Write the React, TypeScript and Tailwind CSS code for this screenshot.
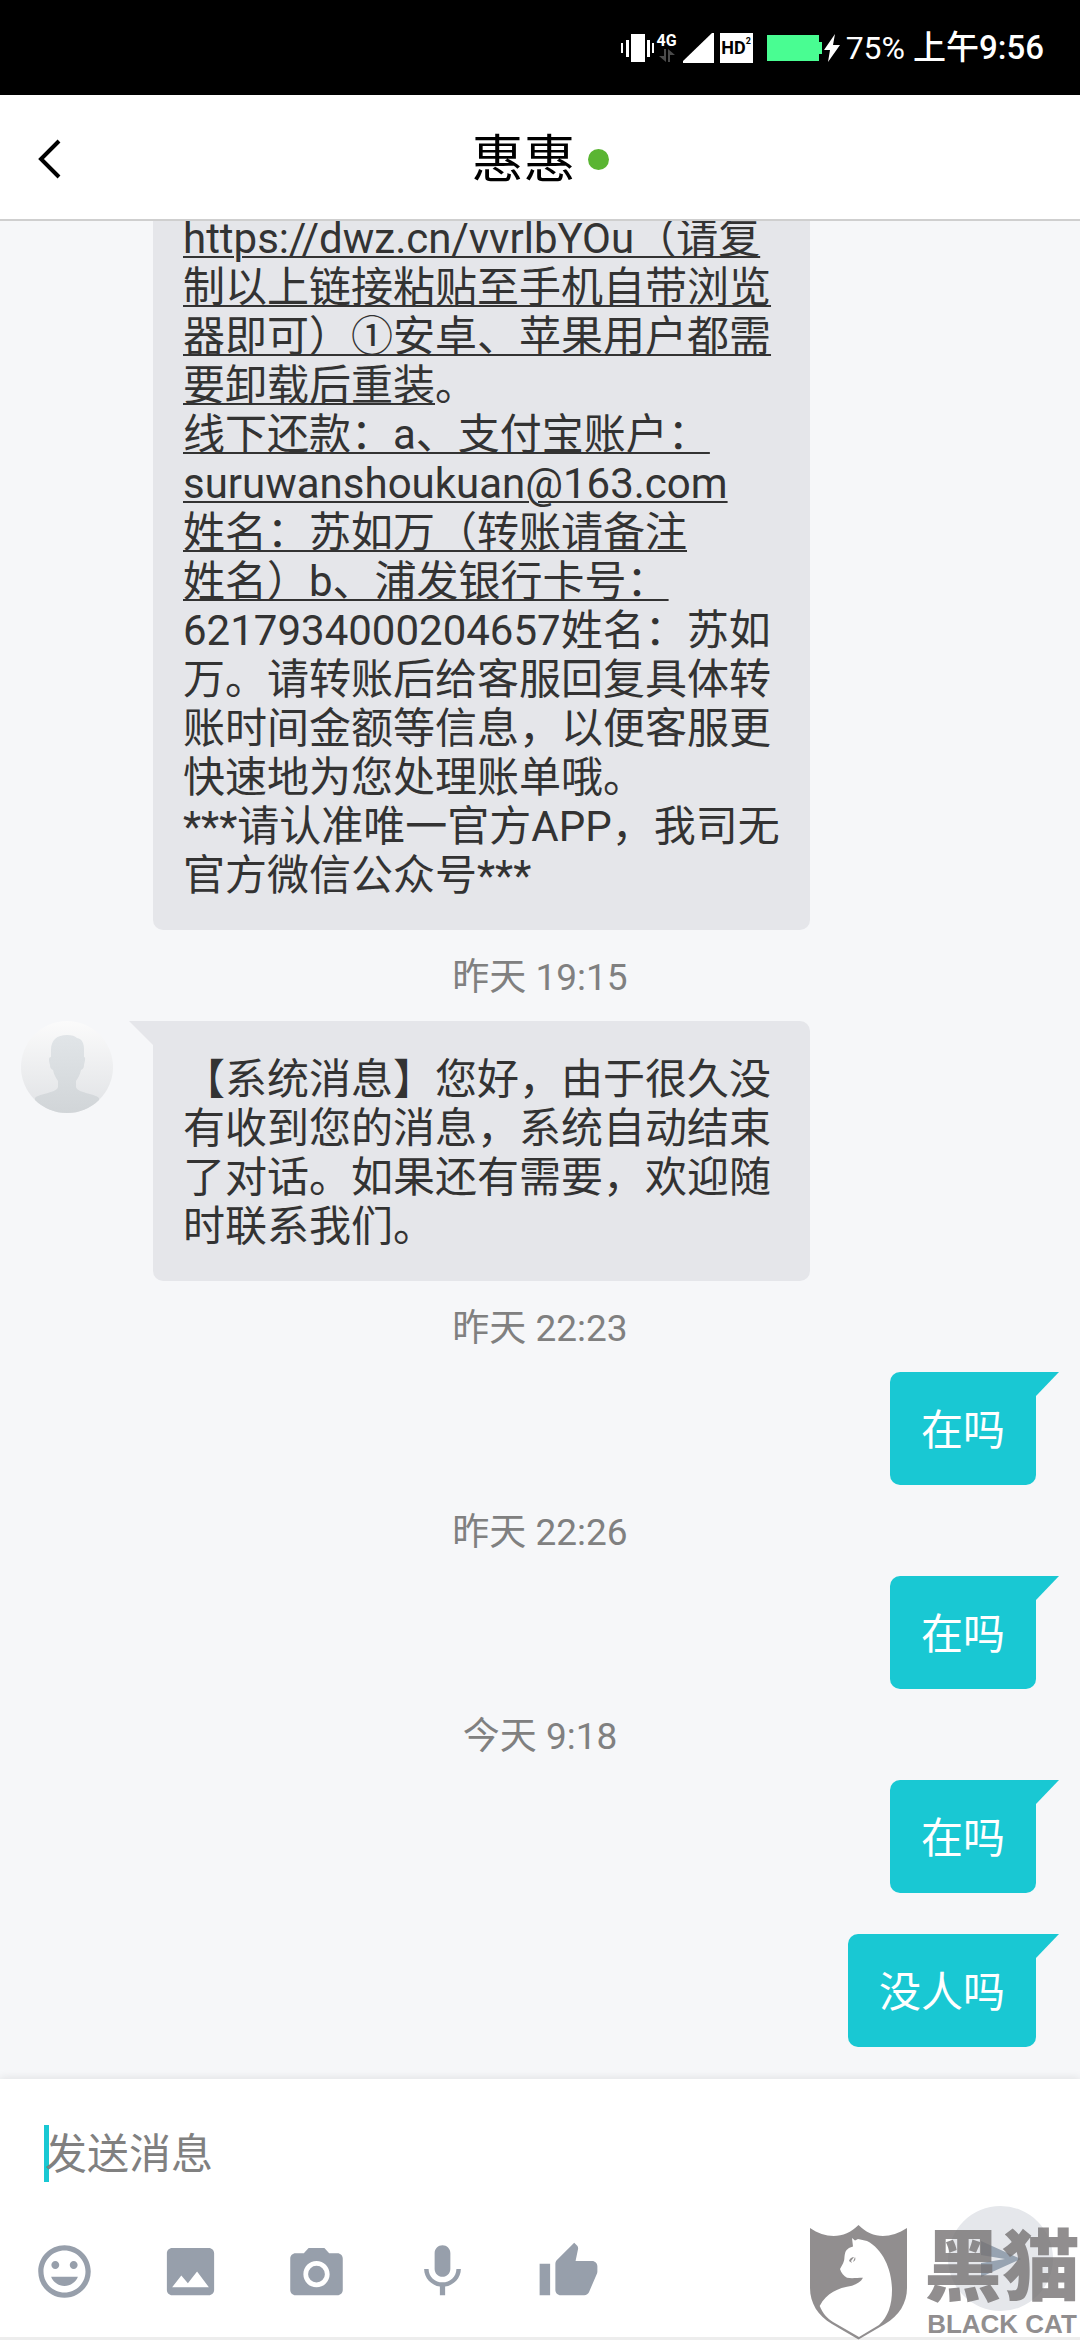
import React from "react";

type Message = {
    time?: string;
    from: "agent" | "me";
    lines: string[];
    underlined?: number;
    avatar?: boolean;
};

const messages: Message[] = [
    {
        from: "agent",
        underlined: 8,
        lines: [
            "https://dwz.cn/vvrlbYOu（请复",
            "制以上链接粘贴至手机自带浏览",
            "器即可）①安卓、苹果用户都需",
            "要卸载后重装。",
            "线下还款：a、支付宝账户：",
            "suruwanshoukuan@163.com",
            "姓名：苏如万（转账请备注",
            "姓名）b、浦发银行卡号：",
            "6217934000204657姓名：苏如",
            "万。请转账后给客服回复具体转",
            "账时间金额等信息，以便客服更",
            "快速地为您处理账单哦。",
            "***请认准唯一官方APP，我司无",
            "官方微信公众号***",
        ],
    },
    {
        time: "昨天 19:15",
        from: "agent",
        avatar: true,
        lines: [
            "【系统消息】您好，由于很久没",
            "有收到您的消息，系统自动结束",
            "了对话。如果还有需要，欢迎随",
            "时联系我们。",
        ],
    },
    { time: "昨天 22:23", from: "me", lines: ["在吗"] },
    { time: "昨天 22:26", from: "me", lines: ["在吗"] },
    { time: "今天 9:18", from: "me", lines: ["在吗"] },
    { from: "me", lines: ["没人吗"] },
];

const tools = [
    {
        label: "表情",
        d: "M11.99 2C6.47 2 2 6.48 2 12s4.47 10 9.99 10C17.52 22 22 17.52 22 12S17.52 2 11.99 2zM12 20c-4.42 0-8-3.58-8-8s3.58-8 8-8 8 3.58 8 8-3.58 8-8 8zm3.5-9c.83 0 1.5-.67 1.5-1.5S16.33 8 15.5 8 14 8.67 14 9.5s.67 1.5 1.5 1.5zm-7 0c.83 0 1.5-.67 1.5-1.5S9.33 8 8.5 8 7 8.67 7 9.5 7.67 11 8.5 11zm3.5 6.5c2.33 0 4.31-1.46 5.11-3.5H6.89c.8 2.04 2.78 3.5 5.11 3.5z",
    },
    {
        label: "图片",
        d: "M21 19V5c0-1.1-.9-2-2-2H5c-1.1 0-2 .9-2 2v14c0 1.1.9 2 2 2h14c1.1 0 2-.9 2-2zM8.5 13.5l2.5 3.01L14.5 12l4.5 6H5l3.5-4.5z",
    },
    {
        label: "拍照",
        d: "M12 9.8a3.2 3.2 0 1 0 0 6.4 3.2 3.2 0 0 0 0-6.4zM9 3L7.17 5H4c-1.1 0-2 .9-2 2v12c0 1.1.9 2 2 2h16c1.1 0 2-.9 2-2V7c0-1.1-.9-2-2-2h-3.17L15 3H9zm3 15c-2.76 0-5-2.24-5-5s2.24-5 5-5 5 2.24 5 5-2.24 5-5 5z",
    },
    {
        label: "语音",
        d: "M12 14c1.66 0 2.99-1.34 2.99-3L15 5c0-1.66-1.34-3-3-3S9 3.34 9 5v6c0 1.66 1.34 3 3 3zm5.3-3c0 3-2.54 5.1-5.3 5.1S6.7 14 6.7 11H5c0 3.41 2.72 6.23 6 6.72V21h2v-3.28c3.28-.48 6-3.3 6-6.72h-1.7z",
    },
    {
        label: "点赞",
        d: "M1 21h4V9H1v12zm22-11c0-1.1-.9-2-2-2h-6.31l.95-4.57.03-.32c0-.41-.17-.79-.44-1.06L14.17 1 7.59 7.59C7.22 7.95 7 8.45 7 9v10c0 1.1.9 2 2 2h9c.83 0 1.54-.5 1.84-1.22l3.02-7.05c.09-.23.14-.47.14-.73v-2z",
    },
];

const StatusBar = () => (
    <div className="flex h-[95px] shrink-0 items-center justify-end bg-black pr-9 text-white">
        {/* Вибрация */}
        <svg width="34" height="30" viewBox="0 0 34 30" fill="#fff">
            <path d="M0 10h2v10H0zM5 7h3v17H5zM10 1h14v28H10zM26 7h3v17h-3zM31 10h2v10h-2z" />
        </svg>
        <div className="ml-0.5 flex flex-col items-center">
            <span className="text-base leading-4 font-bold">4G</span>
            <svg width="16" height="13" viewBox="0 0 16 13" fill="#4a4a4a">
                <path d="M5 0h2v13L0 7h5zM9 13V0l7 6h-5v7z" />
            </svg>
        </div>
        {/* Сигнал */}
        <svg className="ml-1.5" width="31" height="30" viewBox="0 0 31 30" fill="#fff">
            <path d="M31 0v30H0v-2L29 0z" />
        </svg>
        <span className="ml-1.5 flex h-[30px] w-[33px] justify-center bg-white text-black">
            <span className="text-lg leading-[30px] font-bold">HD</span>
            <span className="text-[9px] leading-4 font-bold">2</span>
        </span>
        {/* Батарея */}
        <svg className="ml-3.5" width="73" height="28" viewBox="0 0 73 28">
            <path d="M0 1h52v7h3v12h-3v7H0z" fill="#49fd92" />
            <path d="M68 0L57 16h6l-2 12 12-17h-7z" fill="#fff" />
        </svg>
        <span className="ml-1.5 text-[32px] leading-10">75%</span>
        <span className="ml-2 text-[33px] leading-10 font-medium">上午9:56</span>
    </div>
);

const Header = () => (
    <header className="flex h-[126px] shrink-0 items-center border-b-2 border-[#cfcfcf] bg-white pt-1">
        <button aria-label="返回" className="flex w-[100px] pl-9">
            <svg width="26" height="42" viewBox="0 0 26 42" fill="none" stroke="#000" strokeWidth="4">
                <path d="M23 3L5 21l18 18" />
            </svg>
        </button>
        <div className="flex flex-1 items-center justify-center gap-3">
            <h1 className="pt-1 text-[52px] leading-[60px] text-black">惠惠</h1>
            <span className="h-[21px] w-[21px] rounded-full bg-[#5ab532]" />
        </div>
        <div className="w-[100px]" />
    </header>
);

const Avatar = () => (
    <svg className="h-[92px] w-[92px]" viewBox="0 0 92 92">
        <defs>
            <linearGradient id="avatarBg" x1="0" y1="0" x2="0" y2="1">
                <stop offset="0" stopColor="#fbfbfb" />
                <stop offset="1" stopColor="#e0e2e5" />
            </linearGradient>
            <linearGradient id="avatarMan" x1="0" y1="0" x2="0" y2="1">
                <stop offset="0" stopColor="#e1e5e8" />
                <stop offset="1" stopColor="#d1d5d8" />
            </linearGradient>
            <clipPath id="avatarClip">
                <circle cx="46" cy="46" r="46" />
            </clipPath>
        </defs>
        <g clipPath="url(#avatarClip)">
            <rect width="92" height="92" fill="url(#avatarBg)" />
            <path
                d="M46 14c5 0 8 1 10 3 5 1 7 5 7 11v8c2 0 1 4 0 8 0 3-1 4-3 5-1 5-3 8-5 11v6c1 6 18 6 23 11v15H14V77c5-5 22-5 23-11v-6c-2-3-4-6-5-11-2-1-3-2-3-5-1-4-2-8 1-8v-7c0-10 6-15 16-15z"
                fill="url(#avatarMan)"
            />
        </g>
    </svg>
);

const Bubble = ({ message }: { message: Message }) => {
    const mine = message.from === "me";
    const split = message.underlined ?? 0;

    return (
        <div className={mine ? "flex justify-end pr-[21px]" : "flex pl-[21px]"}>
            {!mine && <div className="w-[108px] shrink-0">{message.avatar && <Avatar />}</div>}
            {!mine && (
                <svg className="shrink-0" width="24" height="24" viewBox="0 0 24 24" fill="#e5e6ea">
                    <path d="M0 0h24v24z" />
                </svg>
            )}
            <div
                className={
                    mine
                        ? "rounded-[10px] rounded-tr-none bg-[#19c8d3] px-[31px] pt-[34px] pb-[30px] text-white"
                        : "w-[62%] rounded-[10px] rounded-tl-none bg-[#e5e6ea] pt-[34px] pb-[30px] pl-[30px] text-[#333]"
                }
            >
                {message.lines.map((line, index) => (
                    <p key={index} className="text-[42px] leading-[49px] whitespace-pre">
                        {index < split ? (
                            <a href="#" className="underline decoration-2 underline-offset-3">
                                {line.replace(/。$/, "")}
                            </a>
                        ) : (
                            line
                        )}
                        {index < split && line.endsWith("。") && "。"}
                    </p>
                ))}
            </div>
            {mine && (
                <svg className="shrink-0" width="23" height="24" viewBox="0 0 23 24" fill="#19c8d3">
                    <path d="M0 0h23L0 24z" />
                </svg>
            )}
        </div>
    );
};

const Watermark = () => (
    <div className="absolute right-0 -bottom-[3px] flex items-end text-[#767374] opacity-80">
        <svg width="98" height="115" viewBox="0 0 98 115" fill="currentColor">
            <path
                fillRule="evenodd"
                d="M0 3c16 11 35 11 48.500-3C62 14 80 14 97 3v60c0 15-8 28-22 36l-26.500 15.500L22 99C8 91 0 78 0 63zM42 13l1 8.500c-4 1-7 3-8 7-1 4 0 6-2 10l-3 5.500c1 4 4 7 7 8.700 5 1 10 0 16 0-2 4-6 6-11 8-12 2-25 6-32.300 20.300C13 89 17 93 23 97l26 15 20-12c9-8 13-20 13-35 0-20-9-41-25-49l-9-2-3 1.500z"
            />
            <path d="M39 36c1-3 3-4 5-4l-3 4 1 2zM43 37l2-5c1 2 0 4-2 5z" />
        </svg>
        <div className="ml-4 flex flex-col items-center">
            <span className="text-[78px] leading-[78px] font-black">黑猫</span>
            <span className="font-['Liberation_Sans',sans-serif] text-[26px] leading-8 font-bold">BLACK CAT</span>
        </div>
    </div>
);

const Composer = () => (
    <footer className="relative shrink-0 border-b-[3px] border-[#ededed] bg-white pt-[46px] pb-[34px] shadow-[0_-2px_8px_rgba(0,0,0,0.08)]">
        <div className="flex items-center pl-11">
            <span className="-mr-1 h-[57px] w-[5px] bg-[#19c8d3]" />
            <input
                aria-label="发送消息"
                placeholder="发送消息"
                className="h-[57px] flex-1 bg-transparent pt-0.5 text-[42px] text-[#333] outline-none placeholder:text-[#808080]"
            />
        </div>
        <div className="mt-[58px] flex gap-[63px] pl-[33px]">
            {tools.map((tool) => (
                <button key={tool.label} aria-label={tool.label}>
                    <svg width="63" height="63" viewBox="0 0 24 24" fill="#979fab">
                        <path d={tool.d} />
                    </svg>
                </button>
            ))}
        </div>
        <button
            aria-label="发送"
            className="absolute right-[27px] bottom-[26px] flex h-[105px] w-[105px] items-center justify-center rounded-full bg-[#e5e7eb]"
        >
            <svg width="40" height="36" viewBox="0 0 40 36" fill="#97a3b1">
                <path d="M0 0l40 18L0 36V22l24-4L0 14z" />
            </svg>
        </button>
        <Watermark />
    </footer>
);

const App = () => {
    return (
        <div className="flex h-screen flex-col overflow-hidden bg-[#f6f7f9] font-[Roboto,'Noto_Sans_CJK_SC',sans-serif]">
            <StatusBar />
            <Header />
            {/* Лента прижата к нижнему краю */}
            <main className="flex min-h-0 flex-1 flex-col justify-end overflow-hidden pb-8">
                {messages.map((message, index) => (
                    <React.Fragment key={index}>
                        {message.time ? (
                            <time className="shrink-0 pt-[26px] pb-[22px] text-center text-[37px] leading-[43px] text-[#808080]">
                                {message.time}
                            </time>
                        ) : (
                            index > 0 && <div className="h-[41px] shrink-0" />
                        )}
                        <Bubble message={message} />
                    </React.Fragment>
                ))}
            </main>
            <Composer />
        </div>
    );
};

export default App;
